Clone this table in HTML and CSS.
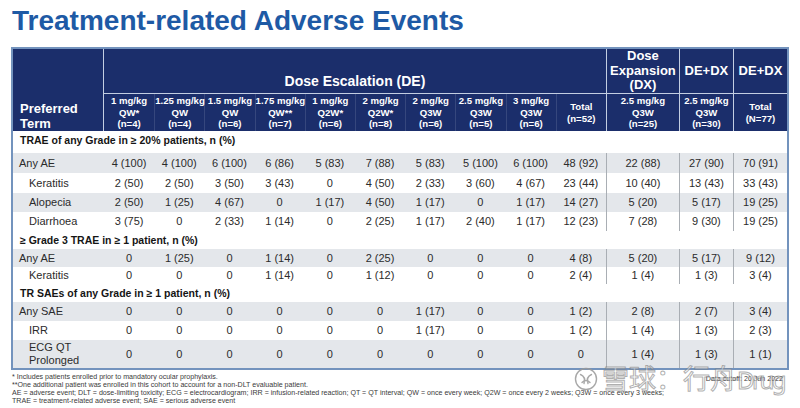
FILE: index.html
```html
<!DOCTYPE html>
<html lang="en">
<head>
<meta charset="utf-8">
<title>Treatment-related Adverse Events</title>
<link rel="stylesheet" href="styles.css">
</head>
<body>
<h1 class="title">Treatment-related Adverse Events</h1>
<div class="table-wrap">
<table class="ae">
<colgroup>
<col class="c-term"><col class="c-de"><col class="c-de"><col class="c-de"><col class="c-de"><col class="c-de"><col class="c-de"><col class="c-de"><col class="c-de"><col class="c-de"><col class="c-de"><col class="c-dx"><col class="c-dd"><col class="c-dd">
</colgroup>
<thead>
<tr class="h1">
<th rowspan="2" class="term">Preferred<br>Term</th>
<th colspan="10" class="de">Dose Escalation (DE)</th>
<th class="grp">Dose<br>Expansion<br>(DX)</th>
<th class="grp">DE+DX</th>
<th class="grp">DE+DX</th>
</tr>
<tr class="h2">
<th class="sep">1 mg/kg<br>QW*<br>(n=4)</th>
<th>1.25 mg/kg<br>QW<br>(n=4)</th>
<th>1.5 mg/kg<br>QW<br>(n=6)</th>
<th>1.75 mg/kg<br>QW**<br>(n=7)</th>
<th>1 mg/kg<br>Q2W*<br>(n=6)</th>
<th>2 mg/kg<br>Q2W*<br>(n=8)</th>
<th>2 mg/kg<br>Q3W<br>(n=6)</th>
<th>2.5 mg/kg<br>Q3W<br>(n=5)</th>
<th>3 mg/kg<br>Q3W<br>(n=6)</th>
<th>Total<br>(n=52)</th>
<th class="sep">2.5 mg/kg<br>Q3W<br>(n=25)</th>
<th class="sep">2.5 mg/kg<br>Q3W<br>(n=30)</th>
<th class="sep">Total<br>(N=77)</th>
</tr>
</thead>
<tbody>
<tr class="sec first"><td colspan="14">TRAE of any Grade in ≥ 20% patients, n (%)</td></tr>
<tr class="shade r20"><td class="lbl">Any AE</td><td>4 (100)</td><td>4 (100)</td><td>6 (100)</td><td>6 (86)</td><td>5 (83)</td><td>7 (88)</td><td>5 (83)</td><td>5 (100)</td><td>6 (100)</td><td>48 (92)</td><td>22 (88)</td><td>27 (90)</td><td>70 (91)</td></tr>
<tr class="r20"><td class="lbl sub">Keratitis</td><td>2 (50)</td><td>2 (50)</td><td>3 (50)</td><td>3 (43)</td><td>0</td><td>4 (50)</td><td>2 (33)</td><td>3 (60)</td><td>4 (67)</td><td>23 (44)</td><td>10 (40)</td><td>13 (43)</td><td>33 (43)</td></tr>
<tr class="shade r19"><td class="lbl sub">Alopecia</td><td>2 (50)</td><td>1 (25)</td><td>4 (67)</td><td>0</td><td>1 (17)</td><td>4 (50)</td><td>1 (17)</td><td>0</td><td>1 (17)</td><td>14 (27)</td><td>5 (20)</td><td>5 (17)</td><td>19 (25)</td></tr>
<tr class="r19"><td class="lbl sub">Diarrhoea</td><td>3 (75)</td><td>0</td><td>2 (33)</td><td>1 (14)</td><td>0</td><td>2 (25)</td><td>1 (17)</td><td>2 (40)</td><td>1 (17)</td><td>12 (23)</td><td>7 (28)</td><td>9 (30)</td><td>19 (25)</td></tr>
<tr class="sec r18"><td colspan="14">≥ Grade 3 TRAE in ≥ 1 patient, n (%)</td></tr>
<tr class="shade r18"><td class="lbl">Any AE</td><td>0</td><td>1 (25)</td><td>0</td><td>1 (14)</td><td>0</td><td>2 (25)</td><td>0</td><td>0</td><td>0</td><td>4 (8)</td><td>5 (20)</td><td>5 (17)</td><td>9 (12)</td></tr>
<tr class="r17"><td class="lbl sub">Keratitis</td><td>0</td><td>0</td><td>0</td><td>1 (14)</td><td>0</td><td>1 (12)</td><td>0</td><td>0</td><td>0</td><td>2 (4)</td><td>1 (4)</td><td>1 (3)</td><td>3 (4)</td></tr>
<tr class="sec r18"><td colspan="14">TR SAEs of any Grade in ≥ 1 patient, n (%)</td></tr>
<tr class="shade r19"><td class="lbl">Any SAE</td><td>0</td><td>0</td><td>0</td><td>0</td><td>0</td><td>0</td><td>1 (17)</td><td>0</td><td>0</td><td>1 (2)</td><td>2 (8)</td><td>2 (7)</td><td>3 (4)</td></tr>
<tr class="r19"><td class="lbl sub">IRR</td><td>0</td><td>0</td><td>0</td><td>0</td><td>0</td><td>0</td><td>1 (17)</td><td>0</td><td>0</td><td>1 (2)</td><td>1 (4)</td><td>1 (3)</td><td>2 (3)</td></tr>
<tr class="shade r28"><td class="lbl sub">ECG QT<br>Prolonged</td><td>0</td><td>0</td><td>0</td><td>0</td><td>0</td><td>0</td><td>0</td><td>0</td><td>0</td><td>0</td><td>1 (4)</td><td>1 (3)</td><td>1 (1)</td></tr>
</tbody>
</table>
</div>
<div class="foot">
<div class="notes">
<p>* Includes patients enrolled prior to mandatory ocular prophylaxis.</p>
<p>**One additional patient was enrolled in this cohort to account for a non-DLT evaluable patient.</p>
<p>AE = adverse event; DLT = dose-limiting toxicity; ECG = electrocardiogram; IRR = infusion-related reaction; QT = QT interval; QW = once every week; Q2W = once every 2 weeks; Q3W = once every 3 weeks;</p>
<p>TRAE = treatment-related adverse event; SAE = serious adverse event</p>
</div>
<div class="cutoff">Data cutoff: 20 Jun 2022</div>
</div>
<div class="watermark">
<svg class="wm-logo" width="24" height="24" viewBox="0 0 24 24"><circle cx="12" cy="12" r="10.5" fill="none" stroke="#9a9a9a" stroke-width="1.4"/><path d="M6.5 7.5 C10 9, 11.5 12, 10 16.5 M17.5 7.5 C14 9, 12.5 12, 14 16.5 M8 15.5 C10.5 13, 13.5 13, 16 15.5" fill="none" stroke="#9a9a9a" stroke-width="1.4" stroke-linecap="round"/></svg>
<span class="wm-text">雪球：行舟<span class="wm-latin">Drug</span></span>
</div>
</body>
</html>
```
FILE: styles.css
```css
* { box-sizing: border-box; }

body {
  margin: 0;
  width: 800px;
  height: 408px;
  background: #ffffff;
  font-family: "Liberation Sans", Arial, sans-serif;
  position: relative;
  overflow: hidden;
}

.title {
  margin: 0;
  padding: 7px 0 0 12px;
  font-size: 28px;
  line-height: 28px;
  font-weight: bold;
  color: #1e5aa5;
}

.table-wrap {
  margin: 12px 0 0 11px;
  width: 778px;
  border: 2px solid #7393bd;
}

table.ae {
  width: 774px;
  table-layout: fixed;
  border-collapse: separate;
  border-spacing: 0;
}

.c-term { width: 91px; }
.c-de { width: 50.2px; }
.c-dx { width: 73px; }
.c-dd { width: 54px; }

thead th {
  background: #1b2e6b;
  color: #ffffff;
  font-weight: bold;
  padding: 0;
  text-align: center;
}

.h1 { height: 45px; }
.h2 { height: 37px; }

.term {
  text-align: left;
  vertical-align: bottom;
  padding: 0 0 0 7px;
  font-size: 13px;
  line-height: 15px;
  border-right: 1px solid #c3cee2;
}

.de {
  font-size: 14px;
  line-height: 16px;
  vertical-align: bottom;
  padding-bottom: 4px !important;
  border-bottom: 1px solid #c3cee2;
}

.grp {
  font-size: 13px;
  line-height: 14.5px;
  vertical-align: middle;
  border-left: 1px solid #c3cee2;
  border-bottom: 1px solid #c3cee2;
}

.h2 th {
  font-size: 9.6px;
  line-height: 11.5px;
  vertical-align: middle;
  white-space: nowrap;
}

.h2 th + th { border-left: 1px solid rgba(255, 255, 255, 0.12); }
.h2 th.sep + th.sep, .h2 th + th.sep { border-left: 1px solid #c3cee2; }

tbody td {
  font-size: 11px;
  line-height: 13px;
  color: #2b2b2b;
  text-align: center;
  vertical-align: middle;
  padding: 0;
  white-space: nowrap;
}

tbody .sec td {
  text-align: left;
  font-weight: bold;
  font-size: 10.5px;
  color: #151515;
  padding-left: 7px;
}

tbody .sec.first { height: 22px; }
tbody .sec.first td { vertical-align: top; padding-top: 3px; }

tbody td.lbl { text-align: left; padding-left: 6px; }
tbody td.sub { padding-left: 16px; }

.shade td { background: #e4e7eb; }

tbody tr:not(.sec) td:nth-child(12),
tbody tr:not(.sec) td:nth-child(13),
tbody tr:not(.sec) td:nth-child(14) {
  border-left: 1px solid #a9aeb4;
}

.r17 { height: 17px; }
.r18 { height: 18px; }
.r19 { height: 19px; }
.r20 { height: 20px; }
.r28 { height: 28px; }

.foot {
  display: flex;
  justify-content: space-between;
  align-items: flex-start;
  padding: 3px 17px 0 12px;
  font-size: 7.1px;
  line-height: 8px;
  color: #3a3a3a;
}

.notes p { margin: 0; white-space: nowrap; }

.cutoff {
  padding-top: 2px;
  white-space: nowrap;
}

.watermark {
  position: absolute;
  left: 574px;
  top: 364px;
  display: flex;
  align-items: center;
  gap: 4px;
  opacity: 0.85;
}

.wm-text {
  font-family: "Noto Sans CJK SC", "Noto Sans", sans-serif;
  font-size: 27px;
  line-height: 28px;
  color: rgba(255, 255, 255, 0.55);
  -webkit-text-stroke: 1px rgba(120, 120, 120, 0.7);
  white-space: nowrap;
}

.wm-latin {
  font-family: "Noto Sans", sans-serif;
  font-size: 24px;
  letter-spacing: -2.5px;
}
```
